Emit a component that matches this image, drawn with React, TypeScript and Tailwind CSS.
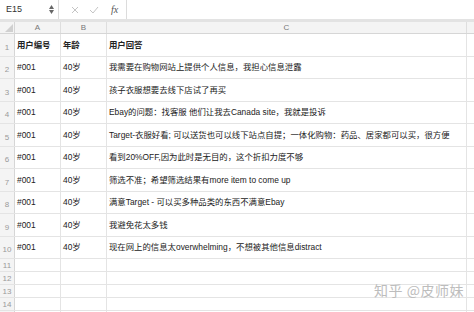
import React from "react";

const rows: [string, string, string][] = [
  ["用户编号", "年龄", "用户回答"],
  ["#001", "40岁", "我需要在购物网站上提供个人信息，我担心信息泄露"],
  ["#001", "40岁", "孩子衣服想要去线下店试了再买"],
  ["#001", "40岁", "Ebay的问题：找客服 他们让我去Canada site，我就是投诉"],
  ["#001", "40岁", "Target-衣服好看; 可以送货也可以线下站点自提；一体化购物：药品、居家都可以买，很方便"],
  ["#001", "40岁", "看到20%OFF,因为此时是无目的，这个折扣力度不够"],
  ["#001", "40岁", "筛选不准；希望筛选结果有more item to come up"],
  ["#001", "40岁", "满意Target - 可以买多种品类的东西不满意Ebay"],
  ["#001", "40岁", "我避免花太多钱"],
  ["#001", "40岁", "现在网上的信息太overwhelming，不想被其他信息distract"],
];

const heights = ["h-[23px]", "h-[22px]", "h-[23px]", "h-[22px]", "h-[23px]", "h-[22px]", "h-[23px]", "h-[22px]", "h-[23px]", "h-[22px]"];

export default function App() {
  return (
    <div
      className="w-[474px] h-[312px] overflow-hidden bg-white relative text-[#222]"
      style={{ fontFamily: '"Liberation Sans", "Noto Sans CJK SC", sans-serif' }}
    >
      {/* formula bar */}
      <div className="h-[19px] flex items-center bg-white">
        <div className="w-[59px] h-full flex items-center justify-between pl-[6px] pr-[4px] border-r border-[#dcdcdc]">
          <span className="text-[9px] text-[#333]">E15</span>
          <div className="flex flex-col items-center gap-[1px]">
            <svg width="5" height="4" viewBox="0 0 5 4"><path d="M0 4 L2.5 0 L5 4Z" fill="#666" /></svg>
            <svg width="5" height="4" viewBox="0 0 5 4"><path d="M0 0 L2.5 4 L5 0Z" fill="#666" /></svg>
          </div>
        </div>
        <div className="w-[68px] h-full flex items-center pl-[12px] gap-[10px] border-r border-[#dcdcdc]">
          <svg width="8" height="8" viewBox="0 0 8 8"><path d="M1 1 L7 7 M7 1 L1 7" stroke="#c4c4c4" strokeWidth="1" /></svg>
          <svg width="10" height="8" viewBox="0 0 10 8"><path d="M1 4 L4 7 L9 1" stroke="#c4c4c4" strokeWidth="1" fill="none" /></svg>
          <span className="text-[10px] italic text-[#555] ml-[2px]" style={{ fontFamily: '"Liberation Serif", serif' }}>fx</span>
        </div>
        <div className="flex-1" />
      </div>
      <div className="h-[3px] bg-[#e3e3e3]" />
      {/* column header */}
      <div className="flex h-[12px] bg-[#f4f4f4] border-b border-[#d6d6d6] text-[8px] text-[#777]">
        <div className="w-[15px] border-r border-[#d6d6d6] relative">
          <svg className="absolute right-[1px] bottom-[1px]" width="8" height="8" viewBox="0 0 8 8"><path d="M8 0 L8 8 L0 8Z" fill="#d0d0d0" /></svg>
        </div>
        <div className="w-[46px] border-r border-[#dedede] flex items-center justify-center">A</div>
        <div className="w-[46px] border-r border-[#dedede] flex items-center justify-center">B</div>
        <div className="w-[360px] border-r border-[#dedede] flex items-center justify-center">C</div>
        <div className="flex-1" />
      </div>
      {/* rows */}
      {rows.map((r, i) => (
        <div key={i} className={`flex ${heights[i]} border-b border-[#e4e4e4] text-[8.4px]`}>
          <div className="w-[15px] bg-[#f4f4f4] border-r border-[#d6d6d6] flex items-end justify-center pb-[2px] text-[8px] text-[#9a9a9a]">
            {i + 1}
          </div>
          <div className={`w-[46px] border-r border-[#e4e4e4] flex items-center pl-[2px] ${i === 0 ? "font-bold" : ""}`}>{r[0]}</div>
          <div className={`w-[46px] border-r border-[#e4e4e4] flex items-center pl-[2px] ${i === 0 ? "font-bold" : ""}`}>{r[1]}</div>
          <div className={`w-[360px] border-r border-[#e4e4e4] flex items-center pl-[2px] whitespace-nowrap ${i === 0 ? "font-bold" : ""}`}>{r[2]}</div>
          <div className="flex-1" />
        </div>
      ))}
      {[11, 12, 13, 14].map((n) => (
        <div key={n} className="flex h-[13px] border-b border-[#e4e4e4]">
          <div className="w-[15px] bg-[#f4f4f4] border-r border-[#d6d6d6] flex items-end justify-center text-[8px] text-[#9a9a9a] leading-[10px]">
            {n}
          </div>
          <div className="w-[46px] border-r border-[#e4e4e4]" />
          <div className="w-[46px] border-r border-[#e4e4e4]" />
          <div className="w-[360px] border-r border-[#e4e4e4]" />
          <div className="flex-1" />
        </div>
      ))}
      <div className="flex h-[13px]">
        <div className="w-[15px] bg-[#f4f4f4] border-r border-[#d6d6d6]" />
        <div className="w-[46px] border-r border-[#e4e4e4]" />
        <div className="w-[46px] border-r border-[#e4e4e4]" />
        <div className="w-[360px] border-r border-[#e4e4e4]" />
        <div className="flex-1" />
      </div>
      {/* watermark */}
      <div className="absolute left-[374px] top-[283px] text-[14px] text-[#bdbdbd] leading-none tracking-[0.5px]" style={{ fontFamily: '"Noto Sans CJK SC", sans-serif' }}>
        知乎 @皮师妹
      </div>
    </div>
  );
}
